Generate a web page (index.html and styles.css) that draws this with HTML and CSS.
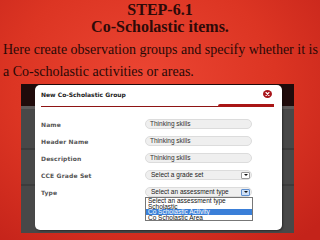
FILE: index.html
```html
<!DOCTYPE html>
<html>
<head>
<meta charset="utf-8">
<link rel="stylesheet" href="styles.css">
</head>
<body>
<div class="slide">
  <div class="title">
    <div>STEP-6.1</div>
    <div>Co-Scholastic items.</div>
  </div>
  <p class="body-text">Here create observation groups and specify whether it is<br>a Co-scholastic activities or areas.</p>
  <div class="shot">
    <div class="modal">
      <div class="modal-head">
        <span class="modal-title">New Co-Scholastic Group</span>
        <span class="close">
          <svg width="9" height="8" viewBox="0 0 9 8"><ellipse cx="4.5" cy="4" rx="4.5" ry="4" fill="#a8141a"/><path d="M3 2.5 L6 5.5 M6 2.5 L3 5.5" stroke="#fff" stroke-width="1.1" stroke-linecap="round"/></svg>
        </span>
      </div>
      <div class="rule"><div class="rule-thin"></div><div class="rule-thick"></div></div>
      <div class="form">
        <span class="lbl">Name</span>
        <div class="field">Thinking skills</div>
        <span class="lbl">Header Name</span>
        <div class="field">Thinking skills</div>
        <span class="lbl">Description</span>
        <div class="field">Thinking skills</div>
        <span class="lbl">CCE Grade Set</span>
        <div class="field select"><span class="sel-text">Select a grade set</span><span class="arrow"></span></div>
        <span class="lbl">Type</span>
        <div class="field select open"><span class="sel-text">Select an assessment type</span><span class="arrow blue"></span>
          <ul class="options">
            <li>Select an assessment type</li>
            <li>Scholastic</li>
            <li class="hl">Co Scholastic Activity</li>
            <li>Co Scholastic Area</li>
          </ul>
        </div>
      </div>
    </div>
  </div>
</div>
</body>
</html>
```

FILE: styles.css
```css
html, body {
  margin: 0;
  padding: 0;
}
body {
  width: 320px;
  height: 240px;
  overflow: hidden;
  background: radial-gradient(ellipse 75% 85% at 45% 35%, #ec4633 0%, #dc3523 55%, #c4231a 100%);
}
.slide {
  display: flex;
  flex-direction: column;
}
.title {
  padding-top: 1px;
  text-align: center;
  font-family: "Liberation Serif", serif;
  font-weight: bold;
  font-size: 16px;
  line-height: 17px;
  color: #2e0a08;
}
.body-text {
  margin: 4px 0 1px 0;
  padding-left: 3px;
  font-family: "Liberation Serif", serif;
  font-size: 14px;
  line-height: 22px;
  color: #2a0906;
  white-space: nowrap;
}
.shot {
  margin-left: 21px;
  width: 273px;
  height: 149px;
  box-sizing: border-box;
  padding: 1px 12px 3px 14px;
  background:
    linear-gradient(to bottom,
      #200b0b 0px, #200b0b 22px,
      #5d5a5a 22px, #5d5a5a 25px,
      #484848 25px, #484848 64px,
      #3c3c3c 64px, #3c3c3c 66px,
      #484848 66px, #484848 100px,
      #3c3c3c 100px, #3c3c3c 102px,
      #484848 102px);
}
.modal {
  width: 247px;
  height: 145px;
  box-sizing: border-box;
  background: #fff;
  border-radius: 5px;
  padding: 0 6px;
  box-shadow: 1px 1px 2px rgba(0,0,0,0.4);
}
.modal-head {
  height: 18px;
  display: flex;
  align-items: center;
  justify-content: space-between;
}
.modal-title {
  font-family: "DejaVu Sans", sans-serif;
  font-weight: bold;
  font-size: 6px;
  color: #222;
}
.close {
  display: flex;
  margin-right: 4px;
}
.rule {
  margin-top: 1px;
  width: 233px;
  height: 3px;
  display: flex;
  align-items: flex-end;
}
.rule-thin {
  flex: 1;
  height: 1.5px;
  background: #8e1414;
}
.rule-thick {
  width: 56px;
  height: 3px;
  background: #a91616;
  border-radius: 2px 0 0 0;
}
.form {
  padding-top: 12px;
  display: grid;
  grid-template-columns: 104px 107px;
  grid-auto-rows: 10px;
  row-gap: 7px;
  align-items: center;
}
.lbl {
  font-family: "DejaVu Sans", sans-serif;
  font-weight: bold;
  font-size: 6px;
  letter-spacing: 0.15px;
  color: #555;
}
.field {
  height: 10px;
  box-sizing: border-box;
  background: #efefef;
  border: 1px solid #dcdcdc;
  border-radius: 5px;
  padding-left: 4px;
  font-family: "Liberation Sans", sans-serif;
  font-size: 6.5px;
  line-height: 8px;
  color: #333;
  display: flex;
  align-items: center;
}
.select {
  justify-content: space-between;
  padding-left: 5px;
  padding-right: 1px;
}
.sel-text {
  color: #222;
}
.arrow {
  width: 9px;
  height: 7px;
  box-sizing: border-box;
  border: 1px solid #9a9a9a;
  border-radius: 1px;
  background: #fff;
  display: flex;
  align-items: center;
  justify-content: center;
}
.arrow::after {
  content: "";
  border-left: 2px solid transparent;
  border-right: 2px solid transparent;
  border-top: 2px solid #111;
}
.arrow.blue {
  background: #cfe0f6;
  border-color: #5e8fd0;
}
.open {
  position: relative;
}
.options {
  position: absolute;
  left: -1px;
  top: 9px;
  width: 106px;
  margin: 0;
  padding: 0;
  list-style: none;
  background: #fff;
  border: 1px solid #777;
  font-family: "Liberation Sans", sans-serif;
  font-size: 6.5px;
  line-height: 5.5px;
  color: #111;
}
.options li {
  height: 5.5px;
  padding-left: 2px;
  white-space: nowrap;
}
.options li.hl {
  background: #3a7fd8;
  color: #fff;
}
```
